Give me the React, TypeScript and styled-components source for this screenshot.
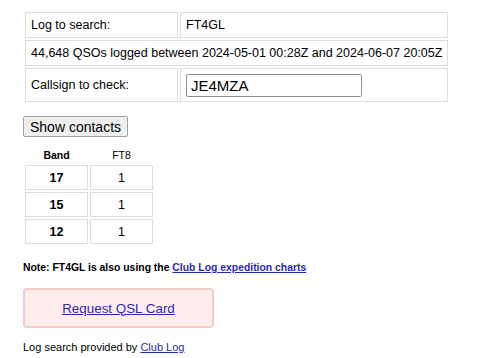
import styled, { createGlobalStyle } from "styled-components";

const GlobalStyle = createGlobalStyle`
  body {
    margin: 0;
    background: #fff;
    font-family: "Liberation Sans", Arial, sans-serif;
    color: #000;
  }
`;

const bands = [
  { band: "17", count: 1 },
  { band: "15", count: 1 },
  { band: "12", count: 1 },
];

function App() {
  return (
    <Page>
      <GlobalStyle />
      <SearchTable>
        <tbody>
          <tr>
            <LabelCell>Log to search:</LabelCell>
            <ValueCell>FT4GL</ValueCell>
          </tr>
          <tr>
            <ValueCell colSpan={2}>
              44,648 QSOs logged between 2024-05-01 00:28Z and 2024-06-07 20:05Z
            </ValueCell>
          </tr>
          <tr>
            <LabelCell $tall>Callsign to check:</LabelCell>
            <ValueCell $tall>
              <CallInput defaultValue="JE4MZA" />
            </ValueCell>
          </tr>
        </tbody>
      </SearchTable>

      <ShowButton>Show contacts</ShowButton>

      <BandTable>
        <thead>
          <tr>
            <HeadCell>Band</HeadCell>
            <HeadCell $light>FT8</HeadCell>
          </tr>
        </thead>
        <tbody>
          {bands.map((b) => (
            <tr key={b.band}>
              <BandCell $bold>{b.band}</BandCell>
              <BandCell>{b.count}</BandCell>
            </tr>
          ))}
        </tbody>
      </BandTable>

      <Note>
        Note: FT4GL is also using the <NoteLink href="#">Club Log expedition charts</NoteLink>
      </Note>

      <QslBox>
        <QslLink href="#">Request QSL Card</QslLink>
      </QslBox>

      <Footer>
        Log search provided by <FooterLink href="#">Club Log</FooterLink>
      </Footer>
    </Page>
  );
}

export default App;

const Page = styled.div`
  padding: 10px 23px 0;
`;

const SearchTable = styled.table`
  border-collapse: separate;
  border-spacing: 2px;
  width: 424px;
  font-size: 12.5px;
`;

const LabelCell = styled.td<{ $tall?: boolean }>`
  border: 1px solid #dcdcdc;
  padding: 0 5px;
  width: 141px;
  height: ${(p) => (p.$tall ? "32px" : "24px")};
  white-space: nowrap;
`;

const ValueCell = styled.td<{ $tall?: boolean }>`
  border: 1px solid #dcdcdc;
  padding: 0 5px;
  height: ${(p) => (p.$tall ? "32px" : "24px")};
  white-space: nowrap;
`;

const CallInput = styled.input`
  box-sizing: border-box;
  width: 176px;
  height: 23px;
  border: 1px solid #8f8f8f;
  border-radius: 2px;
  padding: 0 4px;
  font-family: "Liberation Sans", Arial, sans-serif;
  font-size: 15px;
  color: #000;
  display: block;
`;

const ShowButton = styled.button`
  display: block;
  margin-top: 12px;
  height: 21px;
  padding: 0 6px;
  font-family: "Liberation Sans", Arial, sans-serif;
  font-size: 14px;
  color: #000;
  background: #efefef;
  border: 1px solid #a0a0a0;
  border-radius: 2px;
`;

const BandTable = styled.table`
  margin-top: 8px;
  border-collapse: separate;
  border-spacing: 2px;
  color: #000;
`;

const HeadCell = styled.th<{ $light?: boolean }>`
  font-size: 10.5px;
  font-weight: ${(p) => (p.$light ? "normal" : "bold")};
  color: #000;
  height: 16px;
  padding: 0;
  text-align: center;
`;

const BandCell = styled.td<{ $bold?: boolean }>`
  border: 1px solid #dcdcdc;
  width: 61px;
  height: 23px;
  padding: 0;
  text-align: center;
  font-size: 12.5px;
  color: #000;
  font-weight: ${(p) => (p.$bold ? "bold" : "normal")};
`;

const Note = styled.p`
  margin: 16px 0 0;
  font-size: 10.4px;
  font-weight: bold;
`;

const NoteLink = styled.a`
  color: #2a2aae;
`;

const QslBox = styled.div`
  box-sizing: border-box;
  width: 191px;
  height: 40px;
  margin-top: 15px;
  display: flex;
  align-items: center;
  justify-content: center;
  background: #ffecec;
  border: 2px solid #f6c9c9;
  border-radius: 4px;
`;

const QslLink = styled.a`
  color: #2a2aae;
  font-size: 13.4px;
`;

const Footer = styled.p`
  margin: 13px 0 0;
  font-size: 11px;
`;

const FooterLink = styled.a`
  color: #2a2aae;
`;
